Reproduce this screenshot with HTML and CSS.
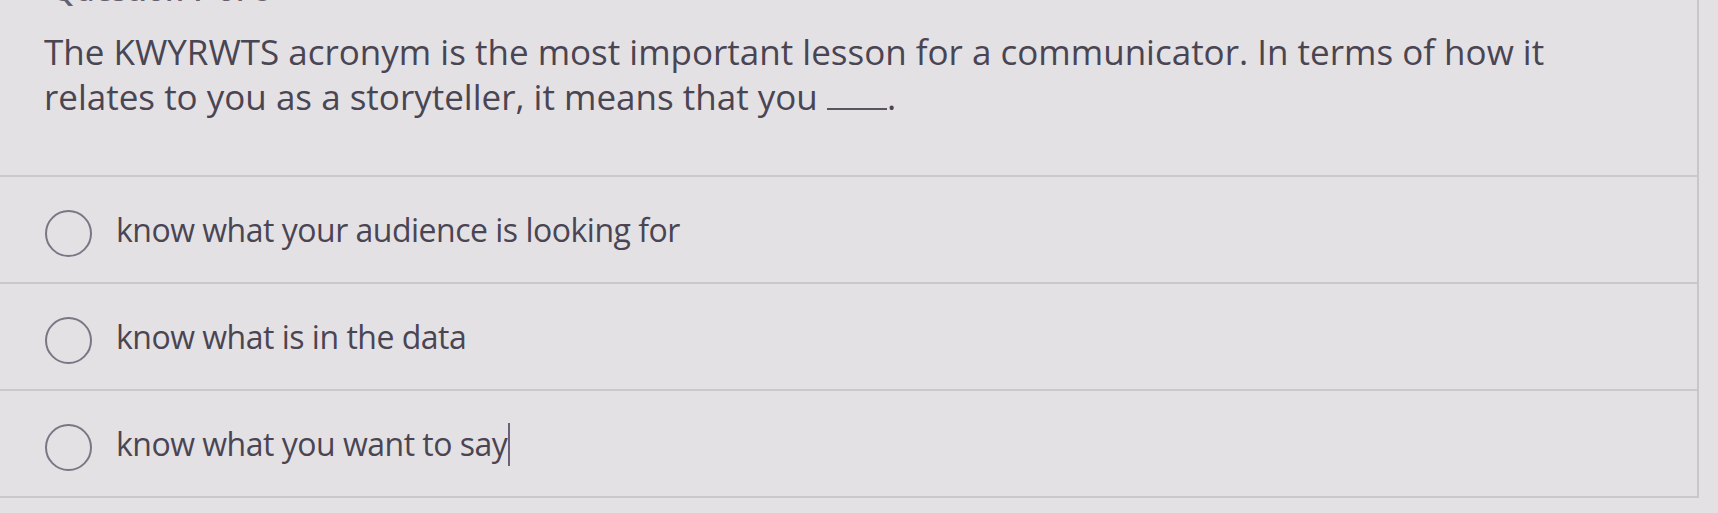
FILE: index.html
```html
<!DOCTYPE html>
<html lang="en">
<head>
<meta charset="utf-8">
<title>Question</title>
<link rel="stylesheet" href="styles.css">
</head>
<body>
<div class="page">
  <div class="panel">
    <div class="question">
      <div class="q-title">Question 7 of 8</div>
      <p class="q-text">The KWYRWTS acronym is the most important lesson for a communicator. In terms of how it relates to you as a storyteller, it means that you <span class="blank"></span>.</p>
    </div>
    <div class="option">
      <span class="radio"></span>
      <span class="label">know what your audience is looking for</span>
    </div>
    <div class="option">
      <span class="radio"></span>
      <span class="label">know what is in the data</span>
    </div>
    <div class="option">
      <span class="radio"></span>
      <span class="label">know what you want to say<span class="caret"></span></span>
    </div>
  </div>
</div>
</body>
</html>
```
FILE: styles.css
```css
html, body {
  margin: 0;
  padding: 0;
}
body {
  background: #e4e1e5;
  font-family: "Open Sans", "DejaVu Sans", sans-serif;
  color: #4a4552;
  overflow: hidden;
  height: 513px;
}
.page {
  width: 1718px;
}
.panel {
  width: 1697px;
  border-right: 2px solid #c9c5cb;
}
.question {
  display: flow-root;
  height: 177px;
  box-sizing: border-box;
  padding-left: 44px;
  border-bottom: 2px solid #cbc7cd;
}
.q-title {
  font-size: 30px;
  font-weight: 600;
  line-height: 40px;
  margin: -30px 0 0 8px;
  height: 40px;
  color: #66616d;
}
.q-text {
  margin: 19px 0 0 0;
  font-size: 35px;
  line-height: 45px;
  width: 1560px;
}
.blank {
  display: inline-block;
  width: 60px;
  border-bottom: 2px solid #5a5462;
  vertical-align: baseline;
}
.option {
  height: 107px;
  box-sizing: border-box;
  display: flex;
  align-items: center;
  padding-left: 45px;
  gap: 24px;
  border-bottom: 2px solid #cbc7cd;
}
.radio {
  width: 47px;
  height: 47px;
  box-sizing: border-box;
  border: 2.5px solid #7b7684;
  border-radius: 50%;
  margin-top: 8px;
  flex: none;
}
.label {
  font-size: 32px;
  letter-spacing: -0.5px;
  line-height: 45px;
}
.caret {
  display: inline-block;
  width: 2px;
  height: 43px;
  background: #6a6077;
  vertical-align: -10px;
  margin-left: 1px;
}
```
